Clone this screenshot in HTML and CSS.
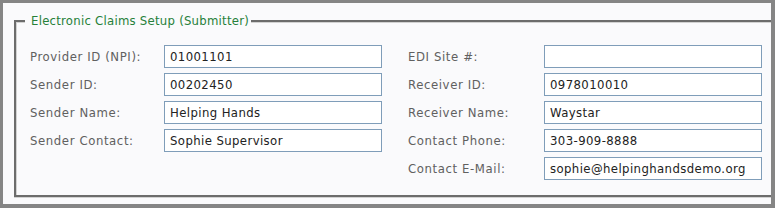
FILE: index.html
```html
<!DOCTYPE html>
<html>
<head>
<meta charset="utf-8">
<link rel="stylesheet" href="styles.css">
</head>
<body>
<div class="frame">
  <fieldset class="group">
    <legend class="group-title">Electronic Claims Setup (Submitter)</legend>
    <div class="form-grid">
      <label class="lbl">Provider ID (NPI):</label>
      <div class="cell"><input class="txt" type="text" value="01001101"></div>
      <label class="lbl">EDI Site #:</label>
      <div class="cell"><input class="txt" type="text" value=""></div>

      <label class="lbl">Sender ID:</label>
      <div class="cell"><input class="txt" type="text" value="00202450"></div>
      <label class="lbl">Receiver ID:</label>
      <div class="cell"><input class="txt" type="text" value="0978010010"></div>

      <label class="lbl">Sender Name:</label>
      <div class="cell"><input class="txt" type="text" value="Helping Hands"></div>
      <label class="lbl">Receiver Name:</label>
      <div class="cell"><input class="txt" type="text" value="Waystar"></div>

      <label class="lbl">Sender Contact:</label>
      <div class="cell"><input class="txt" type="text" value="Sophie Supervisor"></div>
      <label class="lbl">Contact Phone:</label>
      <div class="cell"><input class="txt" type="text" value="303-909-8888"></div>

      <div class="lbl"></div>
      <div class="cell"></div>
      <label class="lbl">Contact E-Mail:</label>
      <div class="cell"><input class="txt" type="text" value="sophie@helpinghandsdemo.org"></div>
    </div>
  </fieldset>
</div>
</body>
</html>
```
FILE: styles.css
```css
html, body {
  margin: 0;
  padding: 0;
}
body {
  font-family: "DejaVu Sans Condensed", "DejaVu Sans", sans-serif;
  font-size: 13px;
}
.frame {
  width: 775px;
  height: 208px;
  box-sizing: border-box;
  border-style: solid;
  border-color: #858585;
  border-width: 3px 4px 4px 3px;
  background: #fafafc;
  overflow: hidden;
}
.group {
  margin: 10px 0 0 11px;
  width: 800px;
  box-sizing: border-box;
  border: 2px solid #6c6c6c;
  padding: 16px 0 15px 14px;
  box-shadow: inset 1px 1px 0 #d2d2d2, 0 1px 0 #d2d2d2;
}
.group-title {
  margin-left: -5px;
  padding: 0 2px 0 6px;
  line-height: 16px;
  letter-spacing: 0.25px;
  color: #27803a;
  background: #fafafc;
}
.form-grid {
  display: grid;
  grid-template-columns: 134px 244px 136px 218px;
  grid-auto-rows: 23px;
  row-gap: 5px;
}
.lbl {
  line-height: 23px;
  letter-spacing: 0.6px;
  color: #606060;
  white-space: nowrap;
}
.cell {
  display: flex;
}
.txt {
  width: 218px;
  height: 23px;
  box-sizing: border-box;
  margin: 0;
  border: 1px solid #7f9db9;
  padding: 0 5px;
  font-family: inherit;
  font-size: 13px;
  letter-spacing: 0.4px;
  color: #222;
  background: #fff;
  outline: none;
}
```
